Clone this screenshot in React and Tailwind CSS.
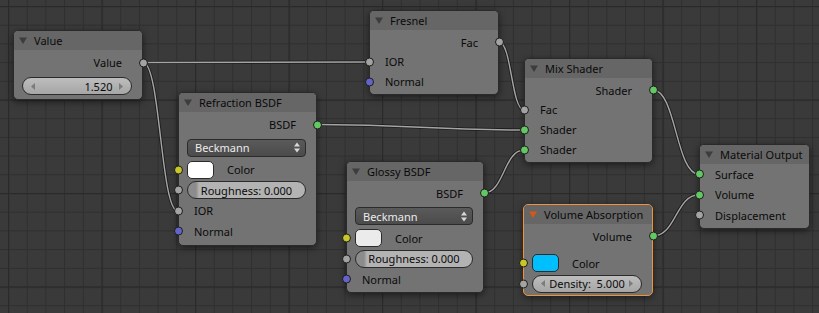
import React from 'react';

// socket colours per type
const sockColor = {
  float: 'bg-[#a3a3a3]',
  shader: 'bg-[#63c763]',
  color: 'bg-[#c7c729]',
  vector: 'bg-[#6464c8]',
};

const Socket = ({ type, side }) => (
  <span
    className={`absolute top-1/2 -translate-y-1/2 w-[9px] h-[9px] rounded-full border border-[#1c1c1c] ${sockColor[type]} ${
      side === 'out' ? 'right-[-5.5px]' : 'left-[-5.5px]'
    }`}
  />
);

const OutRow = ({ label, type }) => (
  <div className="relative h-[19px] flex items-center justify-end pr-[20px]">
    <span>{label}</span>
    <Socket type={type} side="out" />
  </div>
);

const InRow = ({ label, type, short, children }) => (
  <div className={`relative flex items-center ${short ? 'h-[20px]' : 'h-[20.5px]'} ${children ? 'pl-[8px] pr-[10px]' : 'pl-[15px]'}`}>
    {children || <span>{label}</span>}
    <Socket type={type} side="in" />
  </div>
);

const Triangle = ({ selected }) => (
  <svg width="8" height="7" viewBox="0 0 8 7" className="shrink-0">
    <path d="M0 0.5 L8 0.5 L4 7 Z" fill={selected ? '#d4581a' : '#3d3d3d'} />
  </svg>
);

const Node = ({ title, pos, selected, children }) => (
  <div
    className={`absolute rounded-[5px] border bg-[#737373] shadow-[0_2px_7px_rgba(0,0,0,0.5)] ${
      selected ? 'border-[#ee9337]' : 'border-[#2a2a2a]'
    } ${pos}`}
  >
    <div className="h-[19px] rounded-t-[4px] bg-[#666666] flex items-center pl-[5px] gap-[7px]">
      <Triangle selected={selected} />
      <span className="text-[#0a0a0a]">{title}</span>
    </div>
    {children}
  </div>
);

const Dropdown = ({ label }) => (
  <div className="mx-[8px] mr-[10px] h-[18px] rounded-[4px] border border-[#2b2b2b] bg-[linear-gradient(#5a5a5a,#4b4b4b)] flex items-center justify-between pl-[7px] pr-[5px] text-[#ececec]">
    <span>{label}</span>
    <svg width="6" height="11" viewBox="0 0 6 11">
      <path d="M0 4.5 L3 0.5 L6 4.5 Z M0 6.5 L3 10.5 L6 6.5 Z" fill="#d8d8d8" />
    </svg>
  </div>
);

const Swatch = ({ color }) => (
  <div className="flex items-center w-full">
    <div className={`w-[27px] h-[18px] rounded-[5px] border border-[#2b2b2b] ${color}`} />
    <span className="ml-[13px]">Color</span>
  </div>
);

const Arrow = ({ dir }) => (
  <svg width="4" height="7" viewBox="0 0 4 7">
    <path d={dir === 'l' ? 'M4 0 L0 3.5 L4 7 Z' : 'M0 0 L4 3.5 L0 7 Z'} fill="#7c7c7c" />
  </svg>
);

const NumField = ({ children }) => (
  <div className="w-full h-[18px] rounded-full border border-[#2b2b2b] bg-[linear-gradient(#bdbdbd,#a6a6a6)] flex items-center justify-between px-[8px] text-[#0a0a0a]">
    <Arrow dir="l" />
    {children}
    <Arrow dir="r" />
  </div>
);

const Slider = ({ children }) => (
  <div className="w-full h-[18px] rounded-full border border-[#2b2b2b] bg-[linear-gradient(to_right,#8c8c8c_0,#8c8c8c_8px,#b3b3b3_11px,#b3b3b3)] flex items-center justify-center text-[#0a0a0a]">
    {children}
  </div>
);

const GRID = 18.7;

const wire = (x1, y1, x2, y2) => {
  const d = Math.abs(x2 - x1) * 0.5;
  return `M${x1} ${y1} C${x1 + d} ${y1} ${x2 - d} ${y2} ${x2} ${y2}`;
};

const links = [
  [143, 62.5, 369, 62],
  [143, 62.5, 178, 211.25],
  [499, 42, 524, 110],
  [317, 124.5, 524, 130],
  [484, 193, 524, 150],
  [653, 90, 699, 174.25],
  [653, 236, 699, 194.75],
];

export default function App() {
  return (
    <div className="relative w-[819px] h-[313px] overflow-hidden bg-[#3a3a3a] font-[family-name:'Noto_Sans',sans-serif] text-[11px] leading-none text-[#0a0a0a]">
      {/* grid backdrop and noodles, under the nodes so sockets cover wire ends */}
      <svg className="absolute inset-0" width="819" height="313">
        <defs>
          <pattern id="minor" width={GRID} height={GRID} patternUnits="userSpaceOnUse" x="8" y="6">
            <path d={`M0 0.5 H${GRID} M0.5 0 V${GRID}`} stroke="#2f2f2f" strokeWidth="1" fill="none" />
          </pattern>
          <pattern id="major" width={GRID * 5} height={GRID * 5} patternUnits="userSpaceOnUse" x="8" y="6">
            <path d={`M0 0.5 H${GRID * 5} M0.5 0 V${GRID * 5}`} stroke="#2a2a2a" strokeWidth="1.5" fill="none" />
          </pattern>
        </defs>
        <rect width="819" height="313" fill="url(#minor)" />
        <rect width="819" height="313" fill="url(#major)" />
        {links.map(([x1, y1, x2, y2], i) => (
          <g key={i}>
            <path d={wire(x1, y1, x2, y2)} stroke="#1b1b1b" strokeWidth="3.2" fill="none" />
            <path d={wire(x1, y1, x2, y2)} stroke="#a5a5a5" strokeWidth="1.4" fill="none" />
          </g>
        ))}
      </svg>

      <Node title="Value" pos="left-[13px] top-[30px] w-[130px]">
        <div className="pt-[3px]" />
        <OutRow label="Value" type="float" />
        <div className="mt-[5px] ml-[7.5px] mr-[10.5px]">
          <NumField>
            <span className="ml-auto mr-[6px]">1.520</span>
          </NumField>
        </div>
        <div className="pb-[4px]" />
      </Node>

      <Node title="Fresnel" pos="left-[369px] top-[9.5px] w-[130px]">
        <div className="pt-[3px]" />
        <OutRow label="Fac" type="float" />
        <InRow label="IOR" type="float" short />
        <InRow label="Normal" type="vector" short />
        <div className="pb-[2px]" />
      </Node>

      <Node title="Refraction BSDF" pos="left-[178px] top-[92px] w-[139px]">
        <div className="pt-[3px]" />
        <OutRow label="BSDF" type="shader" />
        <div className="mt-[4.5px] mb-[3px]">
          <Dropdown label="Beckmann" />
        </div>
        <InRow type="color">
          <Swatch color="bg-white" />
        </InRow>
        <InRow type="float">
          <Slider>Roughness: 0.000</Slider>
        </InRow>
        <InRow label="IOR" type="float" />
        <InRow label="Normal" type="vector" />
        <div className="pb-[3px]" />
      </Node>

      <Node title="Mix Shader" pos="left-[524px] top-[57.5px] w-[129px]">
        <div className="pt-[3px]" />
        <OutRow label="Shader" type="shader" />
        <InRow label="Fac" type="float" short />
        <InRow label="Shader" type="shader" short />
        <InRow label="Shader" type="shader" short />
        <div className="pb-[2px]" />
      </Node>

      <Node title="Glossy BSDF" pos="left-[346px] top-[160.5px] w-[138px]">
        <div className="pt-[3px]" />
        <OutRow label="BSDF" type="shader" />
        <div className="mt-[4.5px] mb-[3px]">
          <Dropdown label="Beckmann" />
        </div>
        <InRow type="color">
          <Swatch color="bg-[#ebebeb]" />
        </InRow>
        <InRow type="float">
          <Slider>Roughness: 0.000</Slider>
        </InRow>
        <InRow label="Normal" type="vector" />
        <div className="pb-[2.5px]" />
      </Node>

      <Node title="Volume Absorption" pos="left-[523px] top-[203.5px] w-[130px]" selected>
        <div className="pt-[3px]" />
        <OutRow label="Volume" type="shader" />
        <div className="mt-[7.5px]" />
        <InRow type="color">
          <Swatch color="bg-[#00bfff]" />
        </InRow>
        <InRow type="float">
          <NumField>
            <span className="whitespace-pre">Density:  5.000</span>
          </NumField>
        </InRow>
        <div className="pb-[1px]" />
      </Node>

      <Node title="Material Output" pos="left-[699px] top-[144px] w-[111px]">
        <InRow label="Surface" type="shader" />
        <InRow label="Volume" type="shader" />
        <InRow label="Displacement" type="float" />
        <div className="pb-[2px]" />
      </Node>
    </div>
  );
}
